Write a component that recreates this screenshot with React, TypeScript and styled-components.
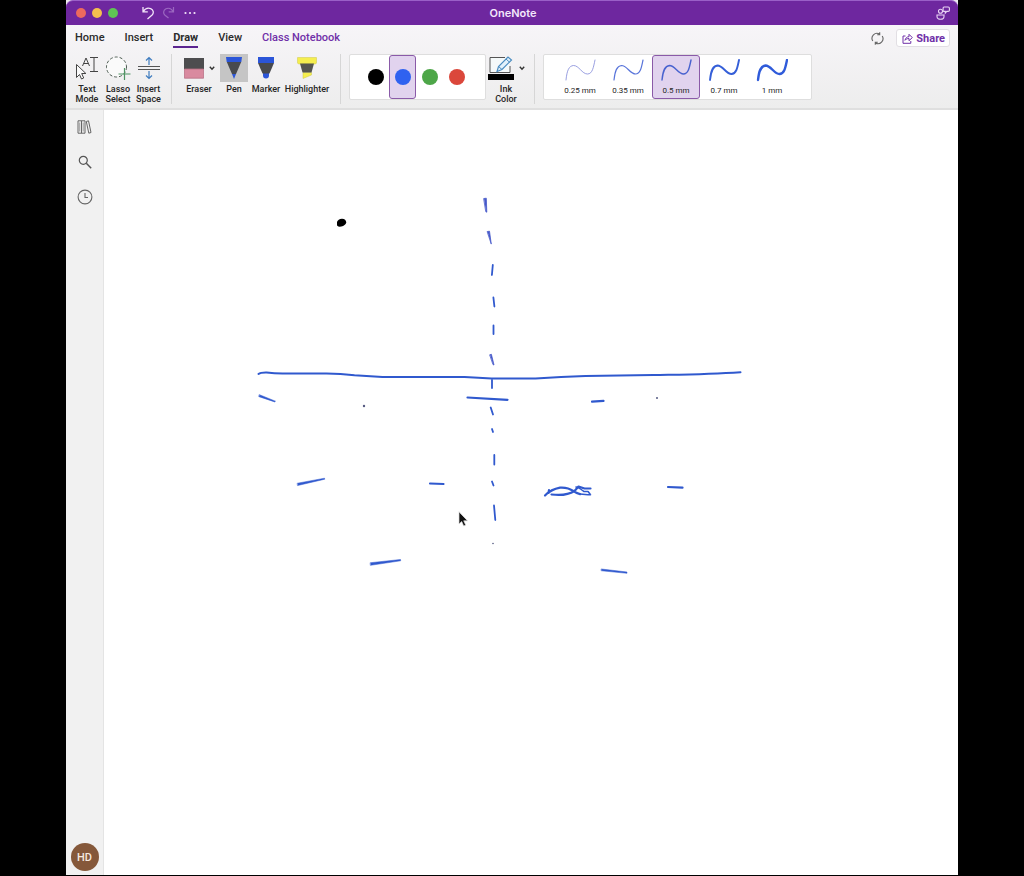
import React from "react";
import styled, { createGlobalStyle } from "styled-components";

const GlobalStyle = createGlobalStyle`
  * { box-sizing: border-box; }
  body {
    margin: 0;
    background: #000;
    color: #262626;
    font-family: Roboto, "Liberation Sans", sans-serif;
    font-size: 11px;
  }
  button {
    margin: 0;
    padding: 0;
    border: 0;
    background: none;
    color: inherit;
    font: inherit;
    cursor: default;
  }
  svg { display: block; flex: none; }
`;

const Desktop = styled.div`
  display: flex;
  min-height: 100vh;
  padding: 0 66px 1px;
`;

const Window = styled.div`
  flex: 1;
  min-width: 0;
  display: flex;
  flex-direction: column;
  background: #eceaee;
`;

const TitleBar = styled.header`
  display: grid;
  grid-template-columns: 1fr auto 1fr;
  align-items: center;
  height: 25px;
  padding: 0 8px 0 10px;
  border-top: 1px solid #9a5fc8;
  border-radius: 7px 7px 0 0;
  background: #6e279f;
  color: #f3e6fb;
`;

const TitleText = styled.h1`
  margin: 0;
  font-family: Inter, "Liberation Sans", sans-serif;
  font-size: 11px;
  font-weight: 600;
`;

const TitleLeft = styled.div`
  display: flex;
  align-items: center;
`;

const Lights = styled.div`
  display: flex;
  gap: 6px;
  margin-right: 19px;
`;

const Light = styled.button<{ $color: string }>`
  width: 10px;
  height: 10px;
  border-radius: 50%;
  background: ${(p) => p.$color};
`;

const TitleButton = styled.button`
  width: 21px;
  height: 20px;
  display: grid;
  place-items: center;
`;

const TitleRight = styled.div`
  display: flex;
  justify-content: flex-end;
`;

const Ribbon = styled.div`
  border-bottom: 2px solid #dfdfdf;
  background: linear-gradient(#f7f5f8, #ededed);
`;

const TabRow = styled.div`
  display: flex;
  align-items: center;
  justify-content: space-between;
  height: 26px;
  padding: 0 8px 0 9px;
`;

const Tabs = styled.nav`
  display: flex;
  gap: 20px;
`;

const Tab = styled.a<{ $active?: boolean; $accent?: boolean }>`
  border-bottom: 2px solid ${(p) => (p.$active ? "#5b2590" : "transparent")};
  padding: 2px 0 1px;
  color: ${(p) => (p.$accent ? "#7030a8" : "#2b2b2b")};
  font-weight: ${(p) => (p.$active ? 700 : 500)};
  line-height: 14px;
  text-decoration: none;
  white-space: nowrap;
`;

const TabActions = styled.div`
  display: flex;
  align-items: center;
  gap: 12px;
`;

const ShareButton = styled.button`
  display: flex;
  align-items: center;
  gap: 3px;
  height: 18px;
  padding: 0 4px 0 5px;
  border: 1px solid #e2dfe4;
  border-radius: 3px;
  background: #fff;
  color: #7030a8;
  font-weight: 700;
`;

const ToolRow = styled.div`
  display: flex;
  align-items: flex-start;
  height: 57px;
  padding: 3px 6px 0;
`;

const Group = styled.div`
  display: flex;
  align-items: flex-start;
`;

const Divider = styled.div`
  flex: none;
  width: 1px;
  height: 50px;
  margin: 0 8px;
  background: #d6d6d6;
`;

const Tool = styled.button<{ $width: number }>`
  display: flex;
  flex-direction: column;
  align-items: center;
  gap: 2px;
  width: ${(p) => p.$width}px;
  font-size: 9px;
  font-weight: 500;
  line-height: 10px;
`;

const ToolIcon = styled.span<{ $active?: boolean }>`
  display: flex;
  align-items: center;
  justify-content: center;
  gap: 5px;
  min-width: 28px;
  height: 28px;
  background: ${(p) => (p.$active ? "#c5c5c5" : "transparent")};
`;

const Panel = styled.div`
  display: flex;
  height: 46px;
  padding: 0 15px 0 12px;
  border: 1px solid #dedede;
  border-radius: 2px;
  background: #fff;
`;

const Choice = styled.button<{ $width: number; $active?: boolean }>`
  display: flex;
  flex-direction: column;
  align-items: center;
  justify-content: center;
  gap: 4px;
  width: ${(p) => p.$width}px;
  border: 1px solid ${(p) => (p.$active ? "#8a5aa8" : "transparent")};
  border-radius: 3px;
  background: ${(p) => (p.$active ? "#e1d3ee" : "transparent")};
  font-size: 8px;
  line-height: 10px;
  white-space: nowrap;
`;

const Swatch = styled.span<{ $color: string }>`
  width: 16px;
  height: 16px;
  border-radius: 50%;
  background: ${(p) => p.$color};
`;

const Body = styled.div`
  flex: 1;
  display: flex;
`;

const SideBar = styled.aside`
  display: flex;
  flex-direction: column;
  align-items: center;
  gap: 15px;
  width: 38px;
  padding: 7px 0 4px;
  border-right: 1px solid #e4e4e4;
  background: #f1f1f1;
`;

const SideButton = styled.button`
  display: grid;
  place-items: center;
  width: 28px;
  height: 20px;
`;

const Avatar = styled.button`
  width: 28px;
  height: 28px;
  margin-top: auto;
  border-radius: 50%;
  background: #85583a;
  color: #f6e9df;
  font-weight: 500;
`;

const Canvas = styled.main`
  flex: 1;
  min-width: 0;
  overflow: hidden;
  background: #fff;
`;

const Chevron = () => (
  <svg width="6" height="6" viewBox="0 0 6 6" fill="none" stroke="#333" strokeWidth="1.4">
    <path d="M.8 1.8 3 4.2 5.2 1.8" />
  </svg>
);

const TextModeIcon = () => (
  <svg width="24" height="24" viewBox="0 0 24 24" fill="none" stroke="#444" strokeWidth="1">
    <path d="M1.5 8.5v13l3-3 2 4.5 2.2-1-2-4.5h4.2z" fill="#fafafa" />
    <path d="M7.5 10 11 2l3.5 8M8.7 7.5h4.6M15 1.5h8M15 15.5h8M19 1.5v14" />
  </svg>
);

const LassoIcon = () => (
  <svg width="26" height="26" viewBox="0 0 26 26" fill="none">
    <circle cx="11.5" cy="12" r="10" fill="#fafafa" stroke="#4b5a50" strokeDasharray="3 2" />
    <path d="M19.5 13v12M13.5 19h12" stroke="#4f9463" strokeWidth="1.2" />
  </svg>
);

const InsertSpaceIcon = () => (
  <svg width="24" height="24" viewBox="0 0 24 24" fill="none">
    <path d="M1 10.5h22M1 13.5h22" stroke="#555" strokeWidth="1.2" />
    <path d="M12 9V1.5M9 4.5l3-3 3 3M12 15v7.5M9 19.5l3 3 3-3" stroke="#3f7cbf" strokeWidth="1.2" />
  </svg>
);

const EraserIcon = () => (
  <svg width="20" height="22" viewBox="0 0 20 22">
    <path fill="#4d4d4f" d="M0 1h20v11H0z" />
    <path fill="#d98a9f" stroke="#b86f84" strokeWidth=".8" d="M.4 12h19.2v9.2H.4z" />
  </svg>
);

const PenIcon = () => (
  <svg width="16" height="22" viewBox="0 0 16 22">
    <path fill="#484a4e" d="m.8 5 5.2 12h4l5.2-12z" />
    <path fill="#2b55d8" d="M0 0h16l-.7 5H.7zM6 17h4l-2 5z" />
  </svg>
);

const MarkerIcon = () => (
  <svg width="16" height="22" viewBox="0 0 16 22">
    <path fill="#2b55d8" d="M0 0h16v6H0zM5 15h6v3.5a3 3 0 0 1-6 0z" />
    <path fill="#484a4e" d="M0 6h16l-4.5 10.5h-7z" />
  </svg>
);

const HighlighterIcon = () => (
  <svg width="20" height="22" viewBox="0 0 20 22">
    <path fill="#f5ee4e" stroke="#cfc84a" strokeWidth=".5" d="M.5.5h19V6l-1 1h-17l-1-1zM6 15.5h8.5V18L6 21.5z" />
    <path fill="#55564f" d="M3 6.5h14l-2.5 9h-9z" />
  </svg>
);

const InkColorIcon = () => (
  <svg width="26" height="26" viewBox="0 0 26 26" fill="none">
    <path d="M17 2.5H2v15h20V11" fill="#f5f9fa" stroke="#555" />
    <path fill="#000" d="M0 19h26v6H0z" />
    <path d="m9 16.5 1.5-5L20 2l3.5 3-9.5 9.5z" fill="#e3f1fb" stroke="#4b8cc0" strokeWidth="1.2" />
    <path d="m18 4 3.5 3.2M10.5 11.5l3.5 3" stroke="#4b8cc0" />
  </svg>
);

const StrokeSample = ({ width, color }: { width: number; color: string }) => (
  <svg width="32" height="23" viewBox="0 0 32 23" fill="none" stroke={color} strokeWidth={width} strokeLinecap="round">
    <path d="M2 21C3 11 5 7 9.5 6.500C15 6.500 18 15 23.5 15C28.5 15 29.5 8 31 1" />
  </svg>
);

const UndoIcon = () => (
  <svg width="14" height="14" viewBox="0 0 14 14" fill="none" stroke="#f1e3f8" strokeWidth="1.3">
    <path d="M2 1v4.8h4.8M2.3 5.5C4 2.8 7 1.5 9.700 2.600c3 1.400 3.300 4.400 1.400 6.400L6.500 13" />
  </svg>
);

const RedoIcon = () => (
  <svg width="14" height="14" viewBox="0 0 14 14" fill="none" stroke="#9b67c0" strokeWidth="1.2">
    <path d="M11.5 1v4.8H6.700M11.200 5.500C9.500 2.800 6.500 1.500 4 2.800 1 4.400 1 7.500 3 9.300L6.500 12" />
  </svg>
);

const DotsIcon = () => (
  <svg width="12" height="4" viewBox="0 0 12 4" fill="#f1e3f8">
    <circle cx="1.5" cy="2" r="1.1" />
    <circle cx="6" cy="2" r="1.1" />
    <circle cx="10.5" cy="2" r="1.1" />
  </svg>
);

const PeopleIcon = () => (
  <svg width="14" height="14" viewBox="0 0 14 14" fill="none" stroke="#ead6f5" strokeWidth="1.1">
    <circle cx="4.5" cy="5.3" r="2" />
    <path d="M1 9h7v1.5C8 12.3 6.5 13.3 4.5 13.3S1 12.3 1 10.5zM8 1h4.2q1.2 0 1.2 1.2v2q0 1.2-1.2 1.2h-1.4L9.3 7V5.4H8q-.9 0-.9-1V2q0-1 .9-1z" />
  </svg>
);

const SyncIcon = () => (
  <svg width="13" height="13" viewBox="0 0 13 13" fill="none" stroke="#666" strokeWidth="1.1">
    <path d="M1.8 9A5 5 0 0 1 8.5 2M11.2 4a5 5 0 0 1-6.7 7M8.7 .3v2.5H6.2M4.3 12.7v-2.5h2.5" />
  </svg>
);

const ShareIcon = () => (
  <svg width="11" height="11" viewBox="0 0 11 11" fill="none" stroke="#7030a8">
    <path d="M3.5 3H1v7.3h7.8V8M3 7.3C3.5 4.8 5 3.7 7 3.7V1.3l3.3 3.3L7 7.7V5.5C5.2 5.5 4 6 3 7.3z" />
  </svg>
);

const NotebooksIcon = () => (
  <svg width="15" height="14" viewBox="0 0 15 14" fill="none" stroke="#666">
    <path d="M1 .8h3.5v12.4H1zM4.5.8H8v12.4H4.5zM9.3 1.5l2.2-.7L14 12.5l-2.2.7z" />
    <path d="M2.7 2.5v9M6.2 2.5v9" strokeWidth=".6" />
  </svg>
);

const SearchIcon = () => (
  <svg width="14" height="14" viewBox="0 0 14 14" fill="none" stroke="#555" strokeWidth="1.2">
    <circle cx="5.3" cy="5.3" r="4" />
    <path d="m8.3 8.3 4.9 4.9" strokeWidth="1.5" />
  </svg>
);

const RecentIcon = () => (
  <svg width="16" height="16" viewBox="0 0 16 16" fill="none" stroke="#666" strokeWidth="1.1">
    <circle cx="8" cy="8" r="6.9" />
    <path d="M8 4v4.5h3" />
  </svg>
);

const Ink = () => (
  <svg width="720" height="500" viewBox="104 110 720 500" fill="none" stroke="#3059ce" strokeWidth="1.8" strokeLinecap="round" strokeLinejoin="round" role="img" aria-label="Ink drawing">
    <path d="M258.500 374q2-1.600 8-1.500 8 1 16 1h44q14 .3 28 1.700l28 1.800h82q14 .7 27 1.500h44q26-1.700 50-2.500l68-1c28-.5 54-.5 87-2.800" strokeWidth="2" />
    <g fill="#4558c9" stroke="#4558c9" strokeWidth=".8">
      <path d="m484 198.500 2.300-.3.500 14-.7-.3zM487.500 231.500l2-.3 1.700 12.500zM490 354.700l1.400-.4 2.600 10.700-.7-.3z" />
    </g>
    <path d="m492.800 265-.9 10M493.400 297.500l1 9M493.500 325.500v8.500M492 380v8M490.700 407.500l2.300 7M492 429l1 3M494.300 455v9.500M492 481.500l1.500 4M494 505.500l1.300 14.500" />
    <path d="m467.500 397.500 40 2.300M592 401.700l11.500-.8M430 483.500l13.500.5M668 487l14.500.6" strokeWidth="2.2" />
    <g fill="#3059ce" stroke="#3059ce" strokeWidth=".5">
      <path d="m259.500 394.700 16 6.500-.8.700-15.700-5.200zM297.500 483.200l27-5 .3 1-27 6.300zM370.500 562.700l30-3.200.2 1.300-30 4.500zM601.500 569l25.500 3v1.300l-25.500-2.500z" />
    </g>
    <path d="M545 495.500c4-4 9-6.700 15-7.800 12-1 13 5 20 6.500M549 490l-.5 3M551.500 494.500c8 1 16 1 23-3.500l4-4.500 6 2h6" strokeWidth="2.2" />
    <path d="M576 487c4 .5 4 2 8 4.500M580 494l8 .8h2.500M585 491.500h3l2 2.500" strokeWidth="1.6" />
    <g fill="#555a82" stroke="none">
      <circle cx="364" cy="406" r="1.2" />
      <circle cx="657" cy="398" r="1" />
      <circle cx="493" cy="543.5" r=".8" />
    </g>
    <path fill="#000" stroke="none" d="M337 222q1-3 5-3.200 4 .2 4.300 3.700-1 3-5 4-4.500.7-4.300-2z" />
    <path fill="#111" stroke="#ddd" strokeWidth=".7" d="M459 512v12l2.700-2.500 2 4.500 2-.9-2-4.300h3.600z" />
  </svg>
);

const COLORS = [
  { name: "Black", value: "#000" },
  { name: "Blue", value: "#2f62f0", active: true },
  { name: "Green", value: "#4da648" },
  { name: "Red", value: "#db473b" },
];

const WIDTHS = [
  { label: "0.25 mm", stroke: 0.8, color: "#7f87d8" },
  { label: "0.35 mm", stroke: 1.2, color: "#5874da" },
  { label: "0.5 mm", stroke: 1.4, color: "#4862cf", active: true },
  { label: "0.7 mm", stroke: 1.9, color: "#355fd8" },
  { label: "1 mm", stroke: 2.4, color: "#2f5bda" },
];

export default function App() {
  return (
    <Desktop>
      <GlobalStyle />
      <Window>
        <TitleBar>
          <TitleLeft>
            <Lights>
              <Light $color="#ec6a5e" aria-label="Close" />
              <Light $color="#f4bf4f" aria-label="Minimize" />
              <Light $color="#5fc454" aria-label="Zoom" />
            </Lights>
            <TitleButton aria-label="Undo"><UndoIcon /></TitleButton>
            <TitleButton aria-label="Redo"><RedoIcon /></TitleButton>
            <TitleButton aria-label="More"><DotsIcon /></TitleButton>
          </TitleLeft>
          <TitleText>OneNote</TitleText>
          <TitleRight>
            <button aria-label="Presence"><PeopleIcon /></button>
          </TitleRight>
        </TitleBar>

        <Ribbon>
          <TabRow>
            <Tabs>
              <Tab href="#home">Home</Tab>
              <Tab href="#insert">Insert</Tab>
              <Tab href="#draw" $active>Draw</Tab>
              <Tab href="#view">View</Tab>
              <Tab href="#class" $accent>Class Notebook</Tab>
            </Tabs>
            <TabActions>
              <button aria-label="Sync"><SyncIcon /></button>
              <ShareButton><ShareIcon />Share</ShareButton>
            </TabActions>
          </TabRow>

          <ToolRow>
            <Group>
              <Tool $width={30}><ToolIcon><TextModeIcon /></ToolIcon>Text Mode</Tool>
              <Tool $width={32}><ToolIcon><LassoIcon /></ToolIcon>Lasso Select</Tool>
              <Tool $width={29}><ToolIcon><InsertSpaceIcon /></ToolIcon>Insert Space</Tool>
            </Group>
            <Divider />
            <Group>
              <Tool $width={38}><ToolIcon><EraserIcon /><Chevron /></ToolIcon>Eraser</Tool>
              <Tool $width={32} aria-pressed><ToolIcon $active><PenIcon /></ToolIcon>Pen</Tool>
              <Tool $width={32}><ToolIcon><MarkerIcon /></ToolIcon>Marker</Tool>
              <Tool $width={50}><ToolIcon><HighlighterIcon /></ToolIcon>Highlighter</Tool>
            </Group>
            <Divider />
            <Panel>
              {COLORS.map((c) => (
                <Choice key={c.name} $width={27} $active={c.active} aria-label={c.name}>
                  <Swatch $color={c.value} />
                </Choice>
              ))}
            </Panel>
            <Tool $width={40}><ToolIcon><InkColorIcon /><Chevron /></ToolIcon>Ink<br />Color</Tool>
            <Divider />
            <Panel>
              {WIDTHS.map((w) => (
                <Choice key={w.label} $width={48} $active={w.active}>
                  <StrokeSample width={w.stroke} color={w.color} />
                  {w.label}
                </Choice>
              ))}
            </Panel>
          </ToolRow>
        </Ribbon>

        <Body>
          <SideBar>
            <SideButton aria-label="Notebooks"><NotebooksIcon /></SideButton>
            <SideButton aria-label="Search"><SearchIcon /></SideButton>
            <SideButton aria-label="Recent"><RecentIcon /></SideButton>
            <Avatar>HD</Avatar>
          </SideBar>
          <Canvas><Ink /></Canvas>
        </Body>
      </Window>
    </Desktop>
  );
}
